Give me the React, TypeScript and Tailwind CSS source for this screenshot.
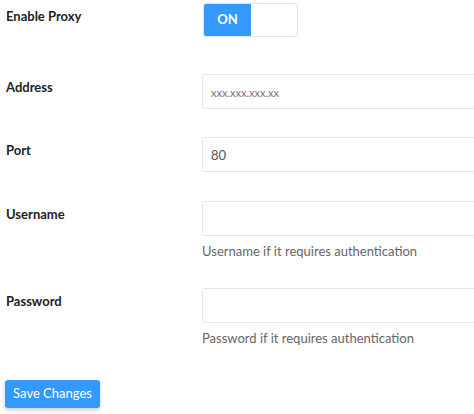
import { useState } from 'react';

interface FieldProps {
  label: string;
  placeholder?: string;
  value?: string;
  help?: string;
  type?: string;
}

function Field({ label, placeholder, value, help, type = 'text' }: FieldProps) {
  return (
    <div className="flex">
      <label className="w-[202px] shrink-0 pl-[6px] pt-[4px] text-[13px] font-bold text-[#222]">{label}</label>
      <div className="flex-1 min-w-0 flex flex-col">
        <input
          type={type}
          defaultValue={value}
          placeholder={placeholder}
          className="h-[35px] w-[300px] rounded-[3px] border border-[#e6e6e6] px-[8px] text-[13px] text-[#555] placeholder:text-[11px] placeholder:text-[#777] outline-none"
        />
        {help && <p className="mt-[6px] text-[13px] text-[#666]">{help}</p>}
      </div>
    </div>
  );
}

export default function App() {
  const [on, setOn] = useState(true);

  return (
    <div className="w-[474px] h-[414px] overflow-hidden bg-white font-['Lato','Open_Sans',sans-serif]">
      <div className="flex pt-[3px]">
        <label className="w-[203px] shrink-0 pl-[6px] pt-[4px] text-[13px] font-bold text-[#222]">Enable Proxy</label>
        <button
          onClick={() => setOn(!on)}
          className="flex h-[34px] w-[95px] overflow-hidden rounded-[3px] border border-[#e3e3e3]"
        >
          <span className={`flex w-[47px] items-center justify-center text-[13px] font-bold ${on ? 'bg-[#3399fd] text-white' : 'bg-white text-transparent'}`}>ON</span>
          <span className="flex-1 bg-white" />
        </button>
      </div>

      <div className="mt-[37px] flex flex-col">
        <Field label="Address" placeholder="xxx.xxx.xxx.xx" />
        <div className="mt-[28px]">
          <Field label="Port" value="80" />
        </div>
        <div className="mt-[29px]">
          <Field label="Username" help="Username if it requires authentication" />
        </div>
        <div className="mt-[26px]">
          <Field label="Password" type="password" help="Password if it requires authentication" />
        </div>
      </div>

      <button className="ml-[5px] mt-[32px] h-[28px] w-[95px] rounded-[3px] bg-[#3399fd] text-[13px] text-white shadow-[0_2px_4px_rgba(0,0,0,0.2)]">
        Save Changes
      </button>
    </div>
  );
}
